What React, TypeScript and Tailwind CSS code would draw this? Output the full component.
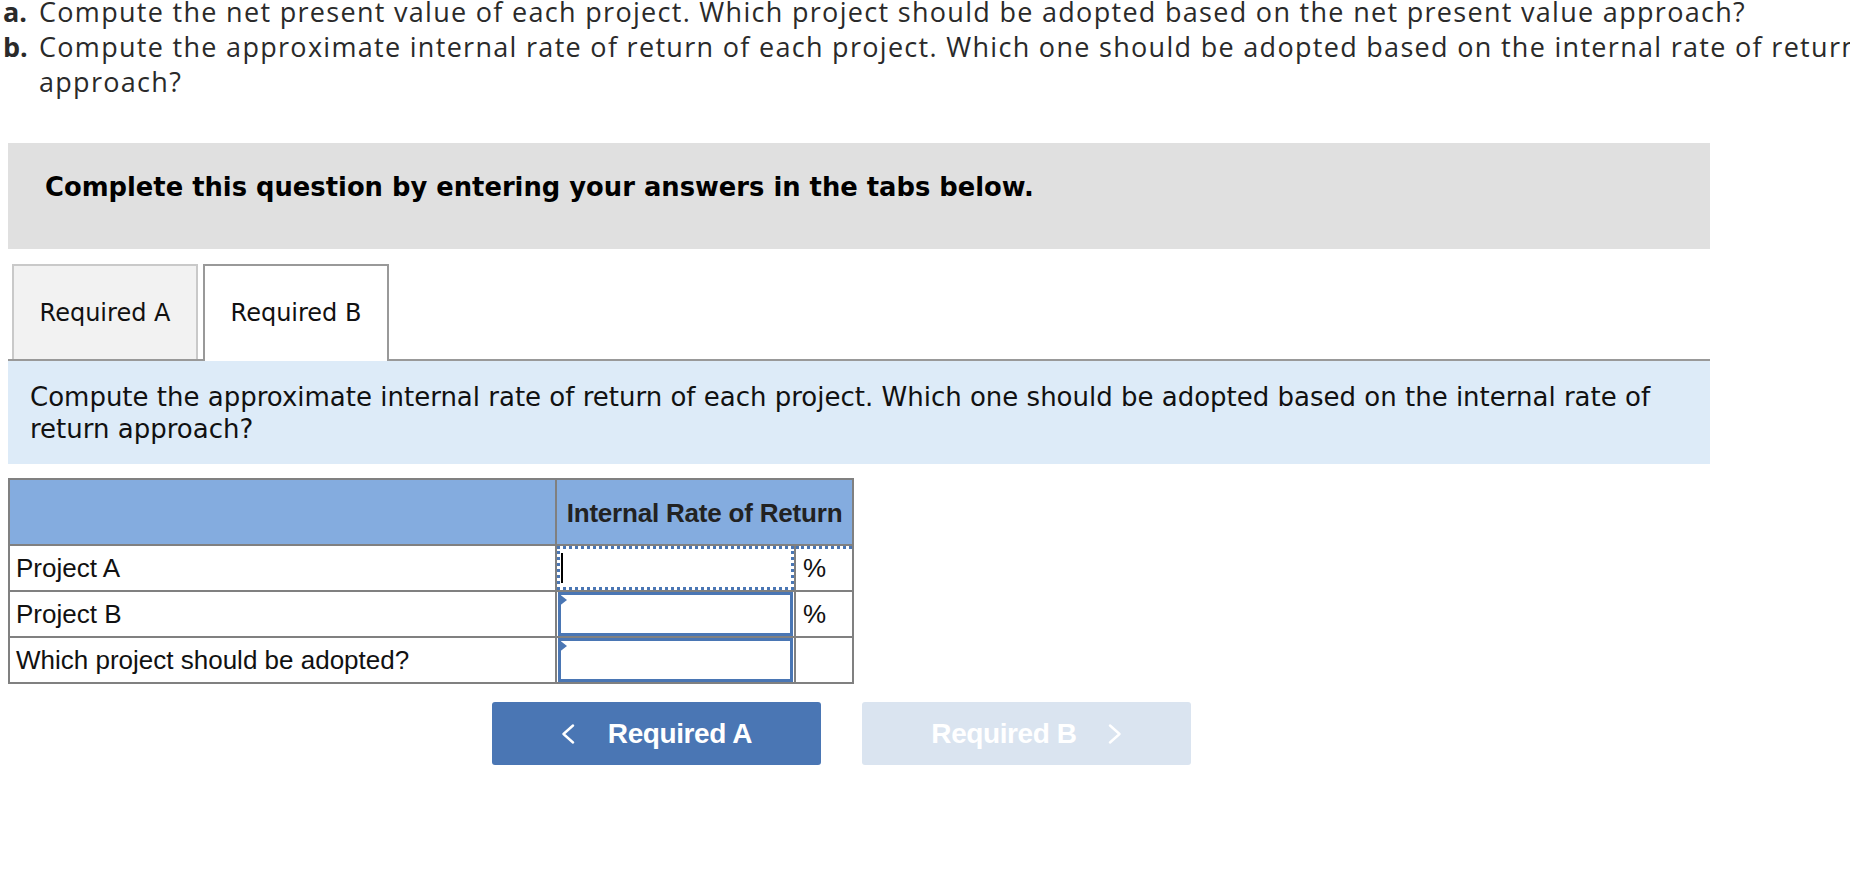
const verdana = { fontFamily: "'DejaVu Sans', Verdana, sans-serif" };
const arial = { fontFamily: "'Liberation Sans', Arial, sans-serif" };

const Chevron = ({ dir }: { dir: "left" | "right" }) => (
  <svg width="14" height="20" viewBox="0 0 14 20" fill="none" stroke="currentColor" strokeWidth="2.4" strokeLinecap="round" strokeLinejoin="round">
    {dir === "left" ? <polyline points="12,1.5 2.5,10 12,18.5" /> : <polyline points="2,1.5 11.5,10 2,18.5" />}
  </svg>
);

const QuestionParts = () => {
  const parts = [
    {
      label: "a.",
      text: "Compute the net present value of each project. Which project should be adopted based on the net present value approach?",
    },
    {
      label: "b.",
      text: "Compute the approximate internal rate of return of each project. Which one should be adopted based on the internal rate of return approach?",
    },
  ];

  return (
    <div
      className="w-[1900px] -mt-[6px] text-[27px] leading-[35px] tracking-[1.3px] text-[#2a2a2a]"
      style={{ fontFamily: "'Open Sans', Lato, sans-serif" }}
    >
      {parts.map((p) => (
        <div key={p.label} className="flex">
          <span className="w-[39px] shrink-0 pl-[3px] font-bold tracking-normal">{p.label}</span>
          <span>{p.text}</span>
        </div>
      ))}
    </div>
  );
};

const Tabs = () => (
  <div className="flex items-end border-b-2 border-[#999] pl-[4px] mt-[15px]" style={verdana}>
    <div className="h-[95px] w-[186px] bg-[#f2f2f2] border-2 border-[#c9c9c9] border-b-0 flex items-center justify-center text-[24px] text-[#111]">
      Required A
    </div>
    <div className="ml-[5px] -mb-[2px] h-[97px] w-[186px] bg-white border-2 border-[#999] border-b-0 flex items-center justify-center pb-[2px] text-[24px] text-[#111]">
      Required B
    </div>
  </div>
);

const InputCell = ({ focused }: { focused?: boolean }) =>
  focused ? (
    <div className="h-full w-full border-[3px] border-dotted border-[#4a76b4] flex items-center pl-[1px]">
      <span className="h-[30px] w-[2px] bg-black" />
    </div>
  ) : (
    <div className="relative h-full w-full pl-[1px] pr-[1px]">
      <div className="h-full w-full border-[3px] border-[#4a76b4] bg-white" />
      <span className="absolute left-[1px] top-[1px] w-0 h-0 border-y-[7px] border-y-transparent border-l-[9px] border-l-[#4a76b4]" />
    </div>
  );

const IrrTable = () => {
  const rows = [
    { label: "Project A", focused: true, pct: true },
    { label: "Project B", focused: false, pct: true },
    { label: "Which project should be adopted?", focused: false, pct: false },
  ];
  return (
    <table
      className="mt-[14px] border-collapse border-2 border-[#808080] text-[26px] text-[#111]"
      style={arial}
    >
      <thead>
        <tr className="h-[66px] bg-[#84acdf]">
          <th className="w-[547px] border-2 border-[#808080]" />
          <th colSpan={2} className="border-2 border-[#808080] font-bold text-[26px] text-[#222] tracking-[-0.2px] pt-[2px]">
            Internal Rate of Return
          </th>
        </tr>
      </thead>
      <tbody>
        {rows.map((r) => (
          <tr key={r.label} className="h-[46px]">
            <td className="border-2 border-[#808080] pl-[6px] leading-none">{r.label}</td>
            <td className="w-[239px] border-2 border-[#808080] p-0 h-[46px]">
              <InputCell focused={r.focused} />
            </td>
            <td className="relative w-[58px] border-2 border-[#808080] pl-[7px] leading-none">
              {r.focused && (
                <span className="absolute left-0 right-0 top-0 border-t-[3px] border-dotted border-[#4a76b4]" />
              )}
              {r.pct ? "%" : ""}
            </td>
          </tr>
        ))}
      </tbody>
    </table>
  );
};

export default function App() {
  return (
    <div className="w-[1850px] min-h-[884px] overflow-hidden bg-white">
      <QuestionParts />

      <div className="ml-[8px] w-[1702px]">
        <div
          className="mt-[44px] h-[106px] bg-[#e0e0e0] pl-[37px] pt-[29px] text-[25.8px] leading-[30px] font-bold text-black"
          style={verdana}
        >
          Complete this question by entering your answers in the tabs below.
        </div>

        <Tabs />
        <div
          className="bg-[#ddebf8] pl-[22px] pr-[30px] pt-[20px] pb-[19px] text-[26px] leading-[32px] text-[#111]"
          style={verdana}
        >
          Compute the approximate internal rate of return of each project. Which one should be adopted based on the internal rate of return approach?
        </div>

        <IrrTable />

        <div className="mt-[18px] flex justify-center gap-[41px] pr-[35px] text-[28px] font-bold text-white tracking-[-0.4px]" style={arial}>
          <button className="h-[63px] w-[329px] rounded-[3px] bg-[#4a76b4] flex items-center justify-center gap-[33px]">
            <Chevron dir="left" />
            <span>Required A</span>
          </button>
          <button className="h-[63px] w-[329px] rounded-[3px] bg-[#dae4f0] flex items-center justify-center gap-[31px]">
            <span>Required B</span>
            <Chevron dir="right" />
          </button>
        </div>
      </div>
    </div>
  );
}
